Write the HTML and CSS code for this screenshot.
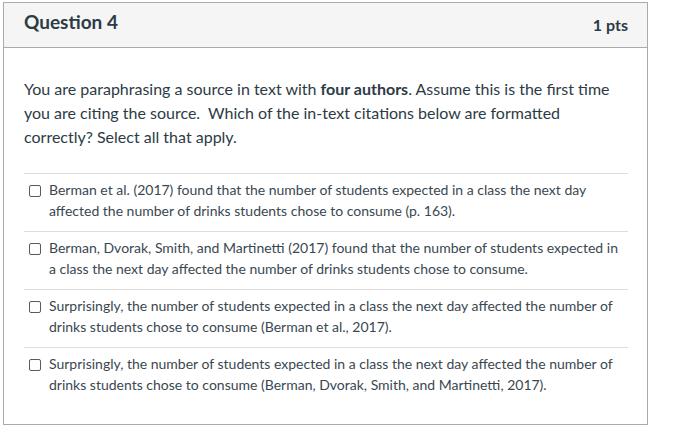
FILE: index.html
```html
<!DOCTYPE html>
<html>
<head>
<meta charset="utf-8">
<link rel="stylesheet" href="styles.css">
</head>
<body>
<div class="card">
  <div class="card-header">
    <h3 class="q-title">Question 4</h3>
    <span class="q-pts">1 pts</span>
  </div>
  <div class="card-body">
    <p class="q-text">You are paraphrasing a source in text with <strong>four authors</strong>. Assume this is the first time you are citing the source.&nbsp; Which of the in-text citations below are formatted correctly? Select all that apply.</p>
    <div class="answers">
      <label class="answer"><span class="box"></span><span class="a-text">Berman et al. (2017) found that the number of students expected in a class the next day affected the number of drinks students chose to consume (p. 163).</span></label>
      <label class="answer"><span class="box"></span><span class="a-text">Berman, Dvorak, Smith, and Martinetti (2017) found that the number of students expected in a class the next day affected the number of drinks students chose to consume.</span></label>
      <label class="answer"><span class="box"></span><span class="a-text">Surprisingly, the number of students expected in a class the next day affected the number of drinks students chose to consume (Berman et al., 2017).</span></label>
      <label class="answer"><span class="box"></span><span class="a-text">Surprisingly, the number of students expected in a class the next day affected the number of drinks students chose to consume (Berman, Dvorak, Smith, and Martinetti, 2017).</span></label>
    </div>
  </div>
</div>
</body>
</html>
```

FILE: styles.css
```css
html, body {
  margin: 0;
  padding: 0;
  background: #ffffff;
}
body {
  font-family: Lato, "Noto Sans", sans-serif;
  color: #2d3b45;
}
.card {
  margin: 2px 0 0 3px;
  width: 645px;
  height: 423px;
  box-sizing: border-box;
  border: 1px solid #aaaaaa;
}
.card-header {
  height: 45px;
  box-sizing: border-box;
  background: #f5f5f5;
  border-bottom: 1px solid #aaaaaa;
  display: flex;
  align-items: flex-start;
  justify-content: space-between;
  padding: 9px 19px 0 20px;
}
.q-title {
  margin: 0;
  font-size: 19px;
  font-weight: 700;
  line-height: 19px;
}
.q-pts {
  margin-top: 3px;
  font-size: 16px;
  font-weight: 700;
  line-height: 19px;
}
.card-body {
  padding: 29px 19px 0 20px;
}
.q-text {
  margin: 0 0 24px 0;
  font-size: 16px;
  line-height: 24px;
}
.q-text strong {
  font-weight: 700;
}
.answer {
  display: flex;
  align-items: flex-start;
  border-top: 1px solid #dddddd;
  padding: 5px 0 10px 5px;
  font-size: 14px;
  line-height: 21px;
  color: #3a4751;
}
.box {
  flex: none;
  width: 12px;
  height: 12px;
  box-sizing: border-box;
  border: 1px solid #555b60;
  border-radius: 2px;
  margin: 6px 8px 0 0;
  background: #fff;
}
.a-text {
  flex: 1;
}
```
